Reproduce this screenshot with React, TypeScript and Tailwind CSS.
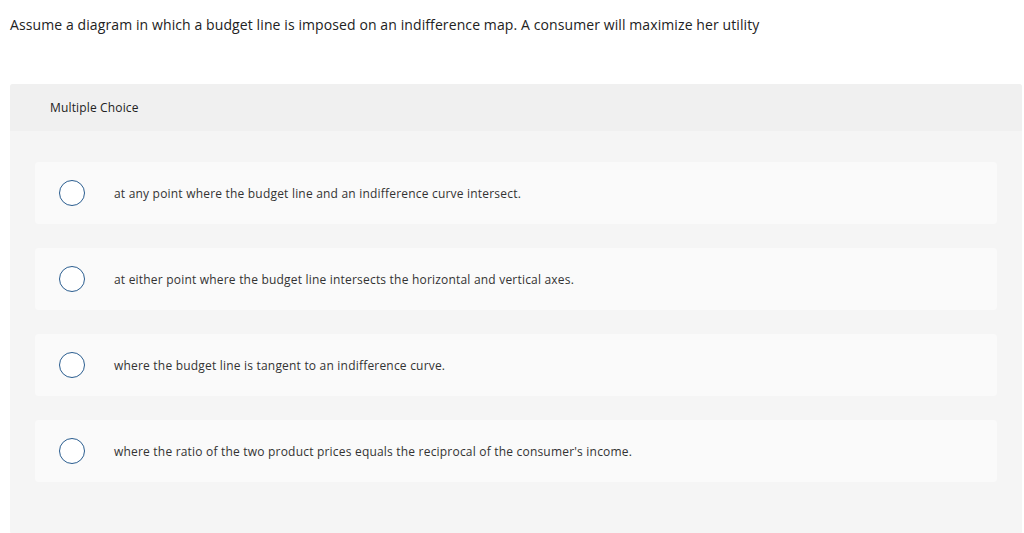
import React from "react";

const choices = [
	"at any point where the budget line and an indifference curve intersect.",
	"at either point where the budget line intersects the horizontal and vertical axes.",
	"where the budget line is tangent to an indifference curve.",
	"where the ratio of the two product prices equals the reciprocal of the consumer's income.",
];

const App: React.FC = () => {
	return (
		<div
			className="min-h-[533px] bg-white text-[#222]"
			style={{ fontFamily: "'Open Sans', Arial, sans-serif" }}
		>
			<div className="px-[10px] pt-[15px] text-[14px] leading-[20px] tracking-[0.1px]">
				Assume a diagram in which a budget line is imposed on an indifference map. A consumer will
				maximize her utility
			</div>

			<div className="ml-[10px] mr-[2px] mt-[49px] overflow-hidden rounded-[3px] bg-[#f5f5f5]">
				<div className="flex h-[47px] items-center bg-[#f0f0f0] pl-[40px] text-[12px] tracking-[0.15px] text-[#222]">
					Multiple Choice
				</div>
				<div className="flex flex-col gap-[24px] pl-[25px] pr-[25px] pt-[31px] pb-[52px]">
					{choices.map((c) => (
						<div
							key={c}
							className="flex h-[62px] items-center rounded-[4px] bg-[#fafafa] pl-[24px]"
						>
							<div className="size-[26px] shrink-0 rounded-full border-[1.5px] border-[#2a5d8f] bg-white" />
							<div className="pl-[29px] pt-[2px] text-[12px] tracking-[0.2px] text-[#333]">{c}</div>
						</div>
					))}
				</div>
			</div>
		</div>
	);
};

export default App;
